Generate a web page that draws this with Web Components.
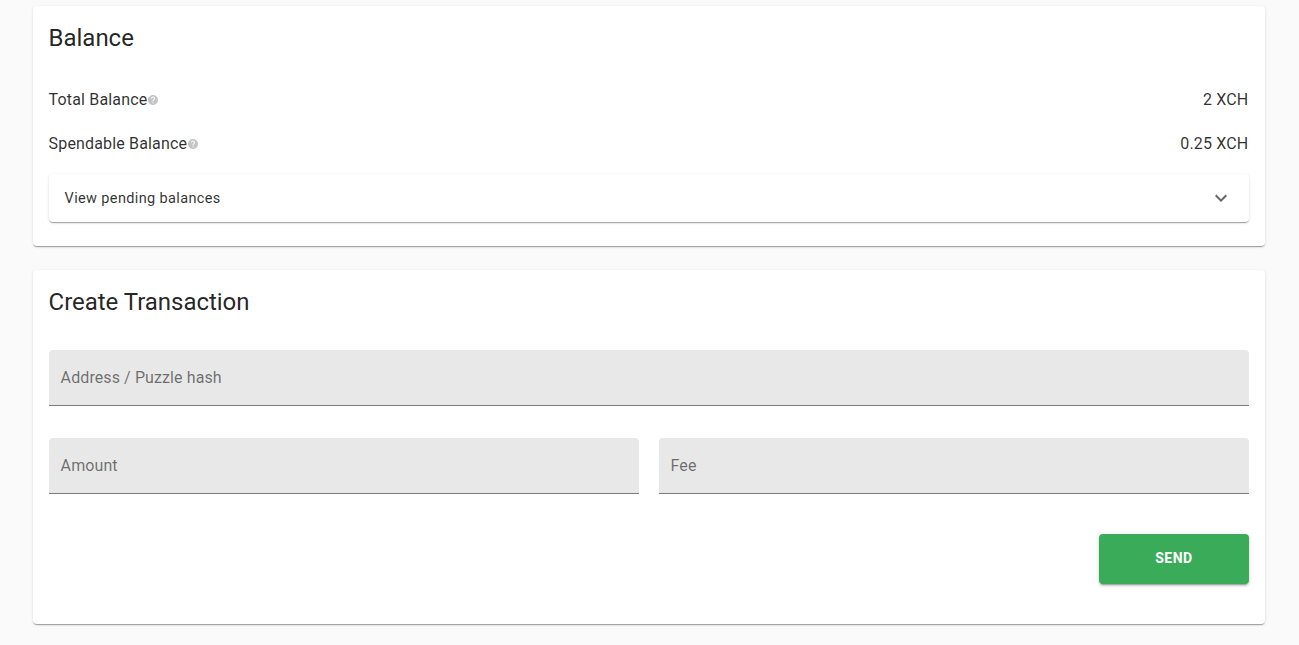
<!DOCTYPE html>
<html lang="en">
<head>
<meta charset="utf-8">
<title>Wallet</title>
<style>
  html, body { margin: 0; background: #fafafa; }
  body { font-family: Roboto, "Liberation Sans", sans-serif; color: rgba(0,0,0,.87); }
</style>
</head>
<body>
<wallet-page>
  <wallet-card heading="Balance">
    <balance-row value="2 XCH">Total Balance</balance-row>
    <balance-row value="0.25 XCH">Spendable Balance</balance-row>
    <pending-panel>View pending balances</pending-panel>
  </wallet-card>
  <wallet-card heading="Create Transaction">
    <send-form></send-form>
  </wallet-card>
</wallet-page>

<script>
// Page column
class WalletPage extends HTMLElement {
  constructor() {
    super();
    this.attachShadow({ mode: 'open' });
    this.shadowRoot.innerHTML = `
      <style>
        :host { display: flex; flex-direction: column; gap: 24px; padding: 6px 34px 21px 33px; }
      </style>
      <slot></slot>`;
  }
}

// White card with a title
class WalletCard extends HTMLElement {
  constructor() {
    super();
    this.attachShadow({ mode: 'open' });
    this.shadowRoot.innerHTML = `
      <style>
        :host {
          display: block;
          background: #fff;
          border-radius: 4px;
          padding: 16px 16px 24px;
          box-shadow: 0 2px 1px -1px rgba(0,0,0,.2), 0 1px 1px 0 rgba(0,0,0,.14), 0 1px 3px 0 rgba(0,0,0,.12);
        }
        h2 {
          margin: 0 0 23px -.4px;
          font: 400 24px/32px Roboto, "Liberation Sans", sans-serif;
          letter-spacing: -.03px;
          color: rgba(0,0,0,.87);
        }
      </style>
      <h2></h2>
      <slot></slot>`;
  }
  connectedCallback() {
    this.shadowRoot.querySelector('h2').textContent = this.getAttribute('heading');
  }
}

// Label + help icon on the left, value on the right
class BalanceRow extends HTMLElement {
  constructor() {
    super();
    this.attachShadow({ mode: 'open' });
    this.shadowRoot.innerHTML = `
      <style>
        :host {
          display: flex;
          justify-content: space-between;
          align-items: center;
          height: 44px;
          box-sizing: border-box;
          padding: 2px .6px 0 0;
          font: 400 16px/24px Roboto, "Liberation Sans", sans-serif;
          letter-spacing: .16px;
          color: rgba(0,0,0,.82);
        }
        .label { display: flex; align-items: center; margin-left: -.4px; }
        svg { width: 12px; height: 12px; fill: #c4c4c4; }
      </style>
      <div class="label">
        <slot></slot>
        <svg viewBox="0 0 24 24"><path d="M12 2C6.48 2 2 6.48 2 12s4.48 10 10 10 10-4.48 10-10S17.52 2 12 2zm1 17h-2v-2h2v2zm2.07-7.75l-.9.92C13.45 12.9 13 13.5 13 15h-2v-.5c0-1.1.45-2.1 1.17-2.83l1.24-1.26c.37-.36.59-.86.59-1.41 0-1.1-.9-2-2-2s-2 .9-2 2H8c0-2.21 1.79-4 4-4s4 1.79 4 4c0 .88-.36 1.68-.93 2.25z"/></svg>
      </div>
      <div class="value"></div>`;
  }
  connectedCallback() {
    this.shadowRoot.querySelector('.value').textContent = this.getAttribute('value');
  }
}

// Collapsed accordion
class PendingPanel extends HTMLElement {
  constructor() {
    super();
    this.attachShadow({ mode: 'open' });
    this.shadowRoot.innerHTML = `
      <style>
        :host {
          display: flex;
          align-items: center;
          justify-content: space-between;
          height: 48px;
          box-sizing: border-box;
          margin-top: 9px;
          padding: 2px 16px 0 15.6px;
          background: #fff;
          border-radius: 4px;
          font: 400 14.5px/20px Roboto, "Liberation Sans", sans-serif;
          letter-spacing: .36px;
          color: rgba(0,0,0,.82);
          box-shadow: 0 2px 1px -1px rgba(0,0,0,.2), 0 1px 1px 0 rgba(0,0,0,.14), 0 1px 3px 0 rgba(0,0,0,.12);
        }
        svg { width: 24px; height: 24px; fill: rgba(0,0,0,.6); margin-top: -2px; }
      </style>
      <slot></slot>
      <svg viewBox="0 0 24 24"><path d="M16.59 8.59L12 13.17 7.41 8.59 6 10l6 6 6-6z"/></svg>`;
  }
}

// Filled text field, the label sits over the input
class TextField extends HTMLElement {
  constructor() {
    super();
    this.attachShadow({ mode: 'open' });
    this.shadowRoot.innerHTML = `
      <style>
        :host {
          display: block;
          position: relative;
          height: 56px;
          box-sizing: border-box;
          background: #e8e8e8;
          border-radius: 4px 4px 0 0;
          border-bottom: 1px solid #7b7b7b;
        }
        label {
          position: absolute;
          left: 11.6px;
          top: 16px;
          font: 400 16px/24px Roboto, "Liberation Sans", sans-serif;
          letter-spacing: .1px;
          color: rgba(0,0,0,.54);
          pointer-events: none;
        }
        input {
          display: block;
          width: 100%;
          height: 100%;
          box-sizing: border-box;
          padding: 27px 12px 10px;
          border: 0;
          outline: 0;
          background: none;
          font: 400 16px Roboto, "Liberation Sans", sans-serif;
        }
      </style>
      <label for="f"><slot></slot></label>
      <input id="f" type="text">`;
  }
  connectedCallback() {
    const input = this.shadowRoot.querySelector('input');
    const label = this.shadowRoot.querySelector('label');
    input.addEventListener('input', () => {
      label.style.display = input.value ? 'none' : '';
    });
  }
}

// Green button
class SendButton extends HTMLElement {
  constructor() {
    super();
    this.attachShadow({ mode: 'open' });
    this.shadowRoot.innerHTML = `
      <style>
        :host { display: block; }
        button {
          display: block;
          width: 150px;
          height: 50px;
          padding: 0 0 2px;
          border: 0;
          border-radius: 4px;
          background: #3aac59;
          color: #fff;
          font: 700 14px/24px Roboto, "Liberation Sans", sans-serif;
          letter-spacing: .5px;
          cursor: pointer;
          box-shadow: 0 3px 1px -2px rgba(0,0,0,.2), 0 2px 2px 0 rgba(0,0,0,.14), 0 1px 5px 0 rgba(0,0,0,.12);
        }
      </style>
      <button type="button"><slot></slot></button>`;
  }
}

// Transaction form
class SendForm extends HTMLElement {
  constructor() {
    super();
    this.attachShadow({ mode: 'open' });
    this.shadowRoot.innerHTML = `
      <style>
        :host { display: flex; flex-direction: column; gap: 32px; padding-top: 9px; padding-bottom: 16px; }
        .pair { display: grid; grid-template-columns: 1fr 1fr; gap: 20px; }
        .actions { display: flex; justify-content: flex-end; margin-top: 8px; }
      </style>
      <text-field>Address / Puzzle hash</text-field>
      <div class="pair">
        <text-field>Amount</text-field>
        <text-field>Fee</text-field>
      </div>
      <div class="actions"><send-button>SEND</send-button></div>`;
  }
}

customElements.define('wallet-page', WalletPage);
customElements.define('wallet-card', WalletCard);
customElements.define('balance-row', BalanceRow);
customElements.define('pending-panel', PendingPanel);
customElements.define('text-field', TextField);
customElements.define('send-button', SendButton);
customElements.define('send-form', SendForm);
</script>
</body>
</html>
